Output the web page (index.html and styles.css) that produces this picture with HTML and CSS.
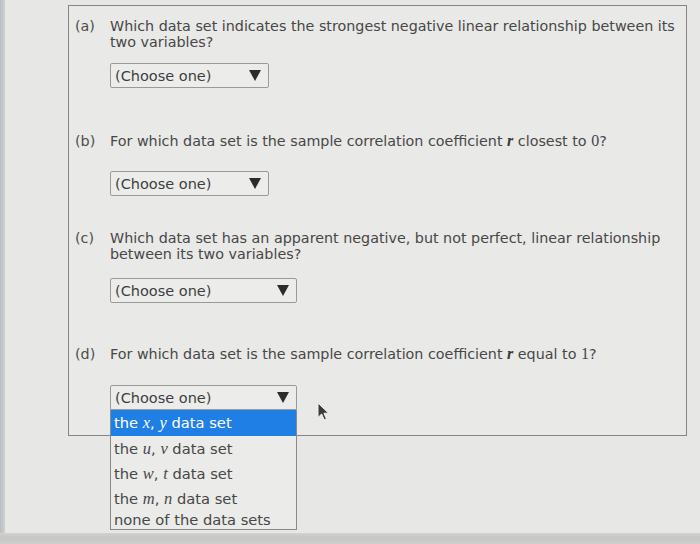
FILE: index.html
```html
<!DOCTYPE html>
<html lang="en">
<head>
<meta charset="utf-8">
<title>Correlation questions</title>
<link rel="stylesheet" href="styles.css">
</head>
<body>
<div class="page">
  <div class="main">
    <div class="edge"></div>
    <div class="box">
      <div class="q q-a">
        <span class="label">(a)</span>
        <div class="body">
          <p class="text">Which data set indicates the strongest negative linear relationship between its two variables?</p>
          <div class="select narrow"><span>(Choose one)</span><svg class="tri" viewBox="0 0 12 11"><polygon points="0,0 12,0 6,11"/></svg></div>
        </div>
      </div>
      <div class="q q-b">
        <span class="label">(b)</span>
        <div class="body">
          <p class="text">For which data set is the sample correlation coefficient <b class="mvar">r</b> closest to <span class="num">0</span>?</p>
          <div class="select narrow"><span>(Choose one)</span><svg class="tri" viewBox="0 0 12 11"><polygon points="0,0 12,0 6,11"/></svg></div>
        </div>
      </div>
      <div class="q q-c">
        <span class="label">(c)</span>
        <div class="body">
          <p class="text">Which data set has an apparent negative, but not perfect, linear relationship between its two variables?</p>
          <div class="select wide"><span>(Choose one)</span><svg class="tri" viewBox="0 0 12 11"><polygon points="0,0 12,0 6,11"/></svg></div>
        </div>
      </div>
      <div class="q q-d">
        <span class="label">(d)</span>
        <div class="body">
          <p class="text">For which data set is the sample correlation coefficient <b class="mvar">r</b> equal to <span class="num">1</span>?</p>
          <div class="select wide open"><span>(Choose one)</span><svg class="tri" viewBox="0 0 12 11"><polygon points="0,0 12,0 6,11"/></svg>
            <ul class="options">
              <li class="opt active">the <i class="v">x</i>, <i class="v">y</i> data set</li>
              <li class="opt">the <i class="v">u</i>, <i class="v">v</i> data set</li>
              <li class="opt">the <i class="v">w</i>, <i class="v">t</i> data set</li>
              <li class="opt">the <i class="v">m</i>, <i class="v">n</i> data set</li>
              <li class="opt last">none of the data sets</li>
            </ul>
          </div>
        </div>
      </div>
    </div>
  </div>
  <div class="band"></div>
  <svg class="cursor" viewBox="0 0 13 19"><path d="M1 1 L1 15.5 L4.6 12 L7.2 17.8 L9.4 16.8 L6.9 11.2 L11.6 11.2 Z"/></svg>
</div>
</body>
</html>
```

FILE: styles.css
```css
html, body {
  margin: 0;
  padding: 0;
}
body {
  background: #e7e7e5;
  font-family: "DejaVu Sans", Verdana, sans-serif;
  font-size: 14.3px;
  color: #474747;
}
.page {
  position: relative;
  width: 700px;
  height: 544px;
  display: grid;
  grid-template-rows: 533px 11px;
  overflow: hidden;
}
.main {
  display: flex;
  align-items: flex-start;
}
.edge {
  width: 5px;
  align-self: stretch;
  background: linear-gradient(90deg, #b9bdc2, #cfd1d3);
}
.band {
  background: linear-gradient(180deg, #d2d2d0 0%, #c6c6c4 40%, #cfcfcd 100%);
}
.box {
  box-sizing: border-box;
  width: 619px;
  margin-left: 63px;
  margin-top: 5px;
  border: 1px solid #858585;
  background: #e9e9e7;
  padding: 12px 0 25px 6px;
}
.q {
  display: grid;
  grid-template-columns: 35px 1fr;
  line-height: 16px;
}
.label {
  color: #4d4d4d;
}
.text {
  margin: 0;
}
.mvar {
  font-family: "Liberation Serif", "Times New Roman", serif;
  font-style: italic;
  font-weight: bold;
  font-size: 16px;
  color: #3a3a3a;
}
.num {
  font-family: "Liberation Serif", "Times New Roman", serif;
  font-size: 16px;
}
.select {
  position: relative;
  box-sizing: border-box;
  height: 25px;
  border: 1px solid #9a9a9a;
  border-radius: 2px;
  background: #ececea;
  display: flex;
  align-items: center;
  justify-content: space-between;
  padding: 0 7px 0 4px;
  color: #3e3e3e;
  font-size: 14.5px;
}
.select.narrow { width: 159px; }
.select.wide { width: 187px; }
.tri {
  width: 12px;
  height: 11px;
  fill: #2c2c2c;
}
.q-a .select { margin-top: 13px; }
.q-b { margin-top: 45px; }
.q-b .select { margin-top: 22px; }
.q-c { margin-top: 34px; }
.q-c .select { margin-top: 16px; }
.q-d { margin-top: 43px; }
.q-d .select { margin-top: 23px; }
.select.open {
  border-bottom-left-radius: 0;
  border-bottom-right-radius: 0;
}
.options {
  position: absolute;
  left: -1px;
  top: 24px;
  width: 187px;
  box-sizing: border-box;
  margin: 0;
  padding: 0;
  list-style: none;
  border: 1px solid #8a8a8a;
  border-top: none;
  background: #ebebe9;
  z-index: 2;
  font-size: 14.7px;
}
.opt {
  display: block;
  height: 25px;
  line-height: 25px;
  padding-left: 3px;
  color: #474747;
  white-space: nowrap;
}
.opt.last {
  height: 18px;
  line-height: 17px;
}
.opt.active {
  background: #1f7fe4;
  color: #ffffff;
  height: 26px;
  line-height: 26px;
}
.v {
  font-family: "Liberation Serif", "Times New Roman", serif;
  font-style: italic;
  font-size: 16.5px;
}
.cursor {
  position: absolute;
  left: 317px;
  top: 402px;
  width: 13px;
  height: 19px;
  fill: #3a3a3a;
  stroke: #f2f2f2;
  stroke-width: 1;
}
```
